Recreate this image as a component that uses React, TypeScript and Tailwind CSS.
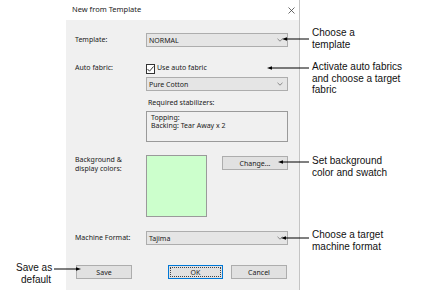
import React from 'react';

const Chevron: React.FC = () => (
  <svg width="6" height="4" viewBox="0 0 6 4" className="shrink-0">
    <polyline points="0.5,0.8 3,3.2 5.5,0.8" fill="none" stroke="#707070" strokeWidth="0.8" />
  </svg>
);

const Dropdown: React.FC<{ value: string; h?: string }> = ({ value, h = 'h-[14px]' }) => (
  <div className={`${h} w-full flex items-center justify-between bg-[#e5e5e5] border border-[#adadad] pl-[2px] pr-[4px]`}>
    <span className="text-[7px] leading-none text-[#1a1a1a]">{value}</span>
    <Chevron />
  </div>
);

const Button: React.FC<{ label: string; className?: string; focused?: boolean }> = ({ label, className = '', focused }) => (
  <div
    className={`h-[14px] flex items-center justify-center bg-[#e1e1e1] border ${
      focused ? 'border-[#0078d7] p-[1px]' : 'border-[#adadad]'
    } ${className}`}
  >
    {focused ? (
      <div className="w-full h-full border border-dotted border-[#444] flex items-center justify-center">
        <span className="text-[7px] leading-none text-[#1a1a1a]">{label}</span>
      </div>
    ) : (
      <span className="text-[7px] leading-none text-[#1a1a1a]">{label}</span>
    )}
  </div>
);

const Arrow: React.FC<{ x1: number; x2: number; y: number; dir?: 'left' | 'right' }> = ({ x1, x2, y, dir = 'left' }) => {
  const w = x2 - x1;
  return (
    <svg
      className="absolute"
      style={{ left: x1, top: y - 3 }}
      width={w}
      height="6"
      viewBox={`0 0 ${w} 6`}
    >
      {dir === 'left' ? (
        <>
          <line x1="3" y1="3" x2={w} y2="3" stroke="#000" strokeWidth="1" />
          <polygon points="0,3 5,1.2 5,4.8" fill="#000" />
        </>
      ) : (
        <>
          <line x1="0" y1="3" x2={w - 3} y2="3" stroke="#000" strokeWidth="1" />
          <polygon points={`${w},3 ${w - 5},1.2 ${w - 5},4.8`} fill="#000" />
        </>
      )}
    </svg>
  );
};

const Callout: React.FC<{ lines: string[]; x: number; y: number }> = ({ lines, x, y }) => (
  <div
    className="absolute text-[10px] leading-[11.5px] text-[#111]"
    style={{ left: x, top: y, fontFamily: '"Liberation Sans", Arial, sans-serif' }}
  >
    {lines.map((l) => (
      <div key={l}>{l}</div>
    ))}
  </div>
);

const App: React.FC = () => {
  return (
    <div
      className="relative w-[423px] h-[293px] bg-white overflow-hidden"
      style={{ fontFamily: '"Noto Sans", "Open Sans", sans-serif' }}
    >
      {/* dialog */}
      <div className="ml-[66px] w-[234px] h-[290px] flex flex-col bg-[#f0f0f0] border-r border-[#c4c4c4]">
        <div className="h-[20px] shrink-0 bg-white flex items-center justify-between pl-[6px] pr-[4px]">
          <span className="text-[7.5px] text-[#1a1a1a]">New from Template</span>
          <svg width="7" height="7" viewBox="0 0 7 7">
            <path d="M0.5 0.5 L6.5 6.5 M6.5 0.5 L0.5 6.5" stroke="#444" strokeWidth="0.8" />
          </svg>
        </div>

        <div className="pl-[9px] pr-[11px] flex flex-col text-[7px] text-[#1a1a1a]">
          <div className="mt-[13px] grid grid-cols-[71px_1fr] items-center">
            <span>Template:</span>
            <Dropdown value="NORMAL" />
          </div>

          <div className="mt-[16px] grid grid-cols-[71px_1fr] items-center h-[11px]">
            <span>Auto fabric:</span>
            <div className="flex items-center gap-[2px]">
              <div className="w-[9px] h-[10px] bg-white border border-[#333] flex items-center justify-center">
                <svg width="7" height="6" viewBox="0 0 7 6">
                  <polyline points="0.5,3 2.5,5.2 6.5,0.5" fill="none" stroke="#222" strokeWidth="0.9" />
                </svg>
              </div>
              <span>Use auto fabric</span>
            </div>
          </div>

          <div className="mt-[3px] grid grid-cols-[71px_1fr]">
            <span />
            <Dropdown value="Pure Cotton" />
          </div>

          <div className="mt-[7px] grid grid-cols-[71px_1fr] h-[10px] items-center">
            <span />
            <span className="pl-[2px]">Required stabilizers:</span>
          </div>

          <div className="mt-[3px] grid grid-cols-[71px_1fr]">
            <span />
            <div className="h-[31px] border border-[#9a9a9a] pl-[4px] pt-[2px] leading-[8px]">
              <div>Topping:</div>
              <div>Backing: Tear Away x 2</div>
            </div>
          </div>

          <div className="mt-[13px] grid grid-cols-[71px_1fr]">
            <div className="leading-[9px]">
              <div>Background &amp;</div>
              <div>display colors:</div>
            </div>
            <div className="flex items-start">
              <div className="w-[61px] h-[62px] bg-[#ccffcc] border border-[#9a9a9a]" />
              <Button label="Change..." className="ml-[15px] mt-[1px] flex-1 h-[13px]" />
            </div>
          </div>

          <div className="mt-[14px] grid grid-cols-[71px_1fr] items-center">
            <span>Machine Format:</span>
            <Dropdown value="Tajima" />
          </div>

          <div className="mt-[20px] flex items-center pl-[1px] pr-[1px]">
            <Button label="Save" className="w-[56px]" />
            <div className="flex-1" />
            <Button label="OK" className="w-[55px]" focused />
            <Button label="Cancel" className="w-[56px] ml-[8px]" />
          </div>
        </div>
      </div>

      {/* callouts */}
      <Arrow x1={282} x2={309} y={39} />
      <Callout lines={['Choose a', 'template']} x={312} y={27} />

      <Arrow x1={267} x2={309} y={68} />
      <Callout lines={['Activate auto fabrics', 'and choose a target', 'fabric']} x={312} y={61} />

      <Arrow x1={278} x2={309} y={162} />
      <Callout lines={['Set background', 'color and swatch']} x={312} y={155} />

      <Arrow x1={281} x2={309} y={238} />
      <Callout lines={['Choose a target', 'machine format']} x={312} y={229} />

      <Arrow x1={54} x2={81} y={269} dir="right" />
      <div
        className="absolute text-[10px] leading-[11.5px] text-[#111] text-center"
        style={{ left: 16, top: 262, fontFamily: '"Liberation Sans", Arial, sans-serif' }}
      >
        <div>Save as</div>
        <div className="pl-[4px]">default</div>
      </div>
    </div>
  );
};

export default App;
